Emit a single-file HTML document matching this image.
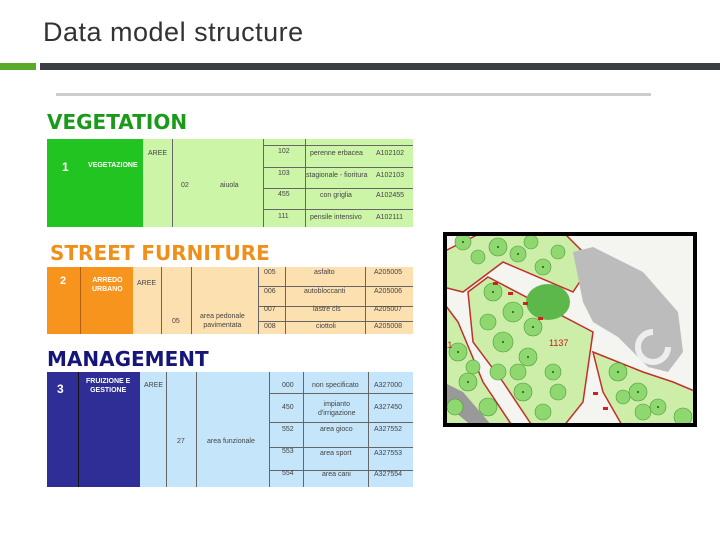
<!DOCTYPE html>
<html><head><style>
*{margin:0;padding:0;box-sizing:border-box}
body{width:720px;height:540px;background:#fff;position:relative;overflow:hidden;font-family:"Liberation Sans",Arial,sans-serif}
.a{position:absolute}
.lbl{position:absolute;font-weight:bold;font-size:20px;line-height:1;font-family:"DejaVu Sans",sans-serif}
.t{position:absolute;font-size:7px;color:#444;text-align:center;white-space:nowrap}
.vl{position:absolute;width:1px;background:#666}
.hl{position:absolute;height:1px;background:#666}
.w{color:#fff;font-weight:bold}
</style></head><body>
<div class="a" style="left:43px;top:17px;font-size:27px;color:#333;letter-spacing:0.5px">Data model structure</div>
<div class="a" style="left:0;top:63px;width:36px;height:7px;background:#5aaa2a"></div>
<div class="a" style="left:40px;top:63px;width:680px;height:7px;background:#3a3f45"></div>
<div class="a" style="left:56px;top:93px;width:595px;height:3px;background:#ccc"></div>

<div class="lbl" style="left:47px;top:112px;color:#1a9a1a">VEGETATION</div>
<div class="a" style="left:47px;top:139px;width:366px;height:88px;background:#ccf5a8"></div>
<div class="a" style="left:47px;top:139px;width:96px;height:88px;background:#22c422"></div>
<div class="vl" style="left:172px;top:139px;height:88px"></div>
<div class="vl" style="left:263px;top:139px;height:88px"></div>
<div class="vl" style="left:305px;top:139px;height:88px"></div>
<div class="hl" style="left:263px;top:145px;width:150px"></div>
<div class="hl" style="left:263px;top:167px;width:150px"></div>
<div class="hl" style="left:263px;top:188px;width:150px"></div>
<div class="hl" style="left:263px;top:209px;width:150px"></div>
<div class="t w" style="left:62px;top:160px;font-size:12px">1</div>
<div class="t w" style="left:88px;top:162px">VEGETAZIONE</div>
<div class="t" style="left:148px;top:150px">AREE</div>
<div class="t" style="left:181px;top:182px">02</div>
<div class="t" style="left:220px;top:182px">aiuola</div>
<div class="t" style="left:278px;top:148px">102</div><div class="t" style="left:310px;top:150px">perenne erbacea</div><div class="t" style="left:376px;top:150px">A102102</div>
<div class="t" style="left:278px;top:170px">103</div><div class="t" style="left:306px;top:172px">stagionale - fioritura</div><div class="t" style="left:376px;top:172px">A102103</div>
<div class="t" style="left:278px;top:191px">455</div><div class="t" style="left:320px;top:192px">con griglia</div><div class="t" style="left:376px;top:192px">A102455</div>
<div class="t" style="left:278px;top:213px">111</div><div class="t" style="left:310px;top:214px">pensile intensivo</div><div class="t" style="left:376px;top:214px">A102111</div>

<div class="lbl" style="left:50px;top:243px;color:#f0901c">STREET FURNITURE</div>
<div class="a" style="left:47px;top:267px;width:366px;height:67px;background:#fde0b0"></div>
<div class="a" style="left:47px;top:267px;width:86px;height:67px;background:#f7941d"></div>
<div class="vl" style="left:80px;top:267px;height:67px;background:#b06010"></div>
<div class="vl" style="left:161px;top:267px;height:67px"></div>
<div class="vl" style="left:191px;top:267px;height:67px"></div>
<div class="vl" style="left:258px;top:267px;height:67px"></div>
<div class="vl" style="left:285px;top:267px;height:67px"></div>
<div class="vl" style="left:365px;top:267px;height:67px"></div>
<div class="hl" style="left:258px;top:286px;width:155px"></div>
<div class="hl" style="left:258px;top:306px;width:155px"></div>
<div class="hl" style="left:258px;top:321px;width:155px"></div>
<div class="t w" style="left:60px;top:275px;font-size:11px">2</div>
<div class="t w" style="left:92px;top:276px;line-height:9px">ARREDO<br>URBANO</div>
<div class="t" style="left:137px;top:280px">AREE</div>
<div class="t" style="left:172px;top:318px">05</div>
<div class="t" style="left:200px;top:312px;line-height:9px">area pedonale<br>pavimentata</div>
<div class="t" style="left:264px;top:269px">005</div><div class="t" style="left:314px;top:269px">asfalto</div><div class="t" style="left:374px;top:269px">A205005</div>
<div class="t" style="left:264px;top:288px">006</div><div class="t" style="left:304px;top:288px">autobloccanti</div><div class="t" style="left:374px;top:288px">A205006</div>
<div class="t" style="left:264px;top:306px">007</div><div class="t" style="left:313px;top:306px">lastre cls</div><div class="t" style="left:374px;top:306px">A205007</div>
<div class="t" style="left:264px;top:323px">008</div><div class="t" style="left:316px;top:323px">ciottoli</div><div class="t" style="left:374px;top:323px">A205008</div>

<div class="lbl" style="left:47px;top:349px;color:#16167a">MANAGEMENT</div>
<div class="a" style="left:47px;top:372px;width:366px;height:115px;background:#c5e5fa"></div>
<div class="a" style="left:47px;top:372px;width:93px;height:115px;background:#2e2e96"></div>
<div class="vl" style="left:78px;top:372px;height:115px;background:#111"></div>
<div class="vl" style="left:166px;top:372px;height:115px"></div>
<div class="vl" style="left:196px;top:372px;height:115px"></div>
<div class="vl" style="left:269px;top:372px;height:115px"></div>
<div class="vl" style="left:303px;top:372px;height:115px"></div>
<div class="vl" style="left:368px;top:372px;height:115px"></div>
<div class="hl" style="left:269px;top:393px;width:144px"></div>
<div class="hl" style="left:269px;top:422px;width:144px"></div>
<div class="hl" style="left:269px;top:447px;width:144px"></div>
<div class="hl" style="left:269px;top:470px;width:144px"></div>
<div class="t w" style="left:57px;top:382px;font-size:12px">3</div>
<div class="t w" style="left:86px;top:377px;line-height:9px">FRUIZIONE E<br>GESTIONE</div>
<div class="t" style="left:144px;top:382px">AREE</div>
<div class="t" style="left:177px;top:438px">27</div>
<div class="t" style="left:207px;top:438px">area funzionale</div>
<div class="t" style="left:282px;top:382px">000</div><div class="t" style="left:312px;top:382px">non specificato</div><div class="t" style="left:374px;top:382px">A327000</div>
<div class="t" style="left:282px;top:404px">450</div><div class="t" style="left:318px;top:400px;line-height:9px">impianto<br>d'irrigazione</div><div class="t" style="left:374px;top:404px">A327450</div>
<div class="t" style="left:282px;top:426px">552</div><div class="t" style="left:320px;top:426px">area gioco</div><div class="t" style="left:374px;top:426px">A327552</div>
<div class="t" style="left:282px;top:448px">553</div><div class="t" style="left:320px;top:450px">area sport</div><div class="t" style="left:374px;top:450px">A327553</div>
<div class="t" style="left:282px;top:470px">554</div><div class="t" style="left:322px;top:471px">area cani</div><div class="t" style="left:374px;top:471px">A327554</div>

<svg class="a" style="left:443px;top:232px" width="254" height="195" viewBox="0 0 254 195">
<rect width="254" height="195" fill="#f4f4f0"/>
<path d="M0 20 L40 0 L120 0 L150 30 L130 60 L60 30 L20 60 L0 55Z" fill="#cdeea8" stroke="#c0302a" stroke-width="1.5"/>
<path d="M25 60 L45 45 L150 100 L140 170 L120 195 L90 195 L60 150 L30 110Z" fill="#cdeea8" stroke="#c0302a" stroke-width="1.5"/>
<path d="M0 70 L15 90 L40 150 L70 195 L0 195Z" fill="#cdeea8" stroke="#c0302a" stroke-width="1.5"/>
<path d="M150 120 L200 140 L230 150 L254 160 L254 195 L180 195 L160 160Z" fill="#cdeea8" stroke="#c0302a" stroke-width="1.5"/>
<path d="M130 20 L150 15 L200 40 L235 80 L240 120 L225 140 L205 135 L175 105 L150 90 L140 70Z" fill="#bcbcbc"/>
<path d="M210 100 a15 15 0 1 0 15 15" fill="none" stroke="#eee" stroke-width="6"/>
<path d="M0 150 L20 160 L50 195 L30 195 L0 170Z" fill="#999"/>
<g fill="#8fd870" stroke="#4a9a3a" stroke-width="0.6">
<circle cx="20" cy="10" r="8"/><circle cx="55" cy="15" r="9"/><circle cx="75" cy="22" r="8"/><circle cx="100" cy="35" r="8"/><circle cx="115" cy="20" r="7"/><circle cx="35" cy="25" r="7"/><circle cx="88" cy="10" r="7"/>
<circle cx="50" cy="60" r="9"/><circle cx="70" cy="80" r="10"/><circle cx="90" cy="95" r="9"/><circle cx="60" cy="110" r="10"/><circle cx="85" cy="125" r="9"/><circle cx="110" cy="140" r="8"/><circle cx="80" cy="160" r="9"/><circle cx="100" cy="180" r="8"/>
<circle cx="45" cy="90" r="8"/><circle cx="75" cy="140" r="8"/><circle cx="115" cy="160" r="8"/><circle cx="55" cy="140" r="8"/>
<circle cx="15" cy="120" r="9"/><circle cx="25" cy="150" r="9"/><circle cx="45" cy="175" r="9"/><circle cx="12" cy="175" r="8"/><circle cx="30" cy="135" r="7"/>
<circle cx="175" cy="140" r="9"/><circle cx="195" cy="160" r="9"/><circle cx="215" cy="175" r="8"/><circle cx="240" cy="185" r="9"/><circle cx="200" cy="180" r="8"/><circle cx="180" cy="165" r="7"/>
</g>
<g fill="#1a5a1a"><circle cx="20" cy="10" r="1"/><circle cx="55" cy="15" r="1"/><circle cx="75" cy="22" r="1"/><circle cx="100" cy="35" r="1"/><circle cx="50" cy="60" r="1"/><circle cx="70" cy="80" r="1"/><circle cx="90" cy="95" r="1"/><circle cx="60" cy="110" r="1"/><circle cx="85" cy="125" r="1"/><circle cx="110" cy="140" r="1"/><circle cx="80" cy="160" r="1"/><circle cx="15" cy="120" r="1"/><circle cx="25" cy="150" r="1"/><circle cx="175" cy="140" r="1"/><circle cx="195" cy="160" r="1"/><circle cx="215" cy="175" r="1"/></g>
<ellipse cx="105" cy="70" rx="22" ry="18" fill="#5cb84a"/>
<g fill="#d02020"><rect x="50" y="50" width="5" height="3"/><rect x="65" y="60" width="5" height="3"/><rect x="80" y="70" width="5" height="3"/><rect x="95" y="85" width="5" height="3"/><rect x="150" y="160" width="5" height="3"/><rect x="160" y="175" width="5" height="3"/></g>
<text x="0" y="116" font-size="9" fill="#c02020" font-family="Liberation Sans">11</text>
<text x="106" y="114" font-size="9" fill="#c02020" font-family="Liberation Sans">1137</text>
<rect x="2" y="2" width="250" height="191" fill="none" stroke="#000" stroke-width="4"/>
</svg>
</body></html>
